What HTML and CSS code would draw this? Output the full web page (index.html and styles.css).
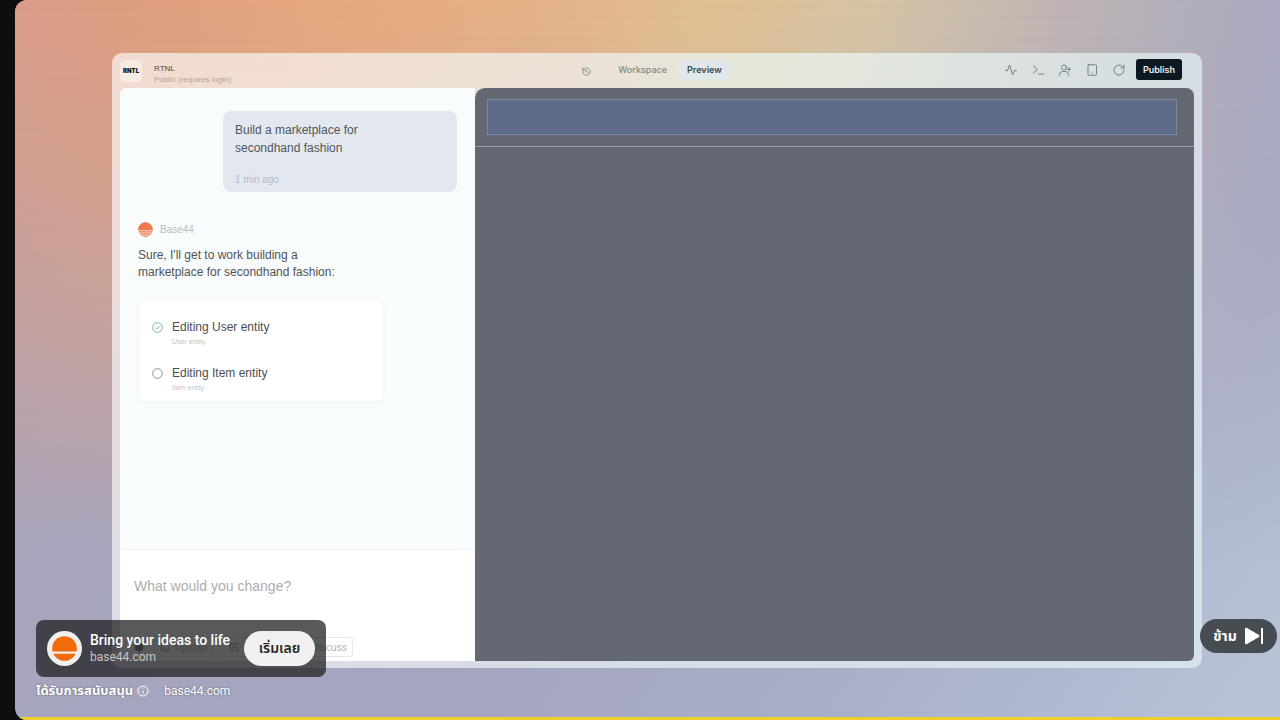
FILE: index.html
```html
<!DOCTYPE html>
<html lang="th">
  <head>
    <meta charset="UTF-8" />
    <meta name="viewport" content="width=device-width, initial-scale=1.0" />
    <title>Base44</title>
    <link rel="stylesheet" href="styles.css">
  </head>
  <body>
    <main class="player">
      <div class="window">
        <header class="topbar">
          <div class="project">
            <span class="project-logo">RNTL</span>
            <div class="project-info">
              <div class="project-name">RTNL</div>
              <div class="project-access">Public (requires login)</div>
            </div>
          </div>
          <nav class="tabs">
            <button type="button" class="icon-btn history" aria-label="History">
              <svg viewBox="0 0 24 24" class="icon small"><path d="M3 8a10 10 0 1 1-1 5" /><path d="M2 2v7h7M11 9l2 5h4" /></svg>
            </button>
            <button type="button" class="tab">Workspace</button>
            <button type="button" class="tab active">Preview</button>
          </nav>
          <div class="actions">
            <button type="button" class="icon-btn" aria-label="Activity">
              <svg viewBox="0 0 24 24" class="icon"><path d="M1 13h4L9 2l6 20 4-9h4" /></svg>
            </button>
            <button type="button" class="icon-btn" aria-label="Console">
              <svg viewBox="0 0 24 24" class="icon"><path d="M3 4l8 7-8 7M13 20h10" /></svg>
            </button>
            <button type="button" class="icon-btn" aria-label="Invite">
              <svg viewBox="0 0 24 24" class="icon"><circle cx="10" cy="7" r="5" /><path d="M1 23v-2a6 6 0 0 1 6-6h6a6 6 0 0 1 6 6v2M20 7v7M16.500 10.500h7" /></svg>
            </button>
            <button type="button" class="icon-btn" aria-label="Mobile view">
              <svg viewBox="0 0 24 24" class="icon"><rect x="4" y="1.500" width="17" height="21" rx="2" /><path d="M12 18v.5" /></svg>
            </button>
            <button type="button" class="icon-btn" aria-label="Refresh">
              <svg viewBox="0 0 24 24" class="icon"><path d="M22 12a10 10 0 1 1-3-7l3 3" /><path d="M22 2v6h-6" /></svg>
            </button>
            <button type="button" class="publish">Publish</button>
          </div>
        </header>

        <div class="workspace">
          <section class="chat">
            <div class="messages">
              <div class="bubble">
                <p>Build a marketplace for<br>secondhand fashion</p>
                <span class="time">1 min ago</span>
              </div>
              <div class="author">
                <svg viewBox="0 0 24 24" class="author-logo">
                  <circle cx="12" cy="12" r="12" fill="#ef7a50" />
                  <path d="M0 14h24M0 17.500h24M0 21h24" stroke="#f8e4dc" stroke-width="1.500" />
                </svg>
                <span>Base44</span>
              </div>
              <p class="reply">Sure, I'll get to work building a<br>marketplace for secondhand fashion:</p>
              <ul class="tasks">
                <li class="task">
                  <svg viewBox="0 0 24 24" class="status done"><circle cx="12" cy="12" r="10.500" /><path d="M8 12.500l3 2.500 5-6" /></svg>
                  <div>
                    <div class="task-title">Editing User entity</div>
                    <div class="task-sub">User entity</div>
                  </div>
                </li>
                <li class="task">
                  <svg viewBox="0 0 24 24" class="status"><circle cx="12" cy="12" r="10.500" /></svg>
                  <div>
                    <div class="task-title">Editing Item entity</div>
                    <div class="task-sub">Item entity</div>
                  </div>
                </li>
              </ul>
            </div>
            <form class="composer">
              <input type="text" class="prompt" placeholder="What would you change?" aria-label="What would you change?" />
              <div class="tools">
                <button type="button" class="tool plain" aria-label="Settings">
                  <svg viewBox="0 0 24 24" class="tool-icon solid"><path d="M12 1l9 5v12l-9 5-9-5V6z" /></svg>
                </button>
                <button type="button" class="tool">
                  <svg viewBox="0 0 24 24" class="tool-icon"><path d="M13 3H3v18h18v-9M3 18l6-6 8 8M19 9V2M15 5l4-4 4 4" /></svg>
                  Upload
                </button>
                <button type="button" class="tool">
                  <svg viewBox="0 0 24 24" class="tool-icon"><path d="M13 3H3v18h18v-9M9 15l1-4 9-9 3 3-9 9z" /></svg>
                  Visual edit
                </button>
                <button type="button" class="tool">Discuss</button>
              </div>
            </form>
          </section>

          <section class="preview">
            <div class="preview-nav"><div class="preview-bar"></div></div>
          </section>
        </div>
      </div>

      <aside class="sponsor">
        <div class="ad-card">
          <svg viewBox="0 0 34 34" class="ad-logo">
            <circle cx="17" cy="17" r="17" fill="#f1efee" />
            <circle cx="17" cy="17" r="12" fill="#f26a0b" />
            <path d="M4 21h26" stroke="#f1efee" stroke-width="2" />
          </svg>
          <div class="ad-text">
            <div class="ad-title">Bring your ideas to life</div>
            <div class="ad-domain">base44.com</div>
          </div>
          <button type="button" class="ad-cta">เริ่มเลย</button>
        </div>
        <div class="ad-meta">
          <span class="ad-label">ได้รับการสนับสนุน</span>
          <svg viewBox="0 0 24 24" class="info"><circle cx="12" cy="12" r="10" /><path d="M12 11v6M12 7v1" /></svg>
          <a href="#" class="ad-link">base44.com</a>
        </div>
      </aside>

      <button type="button" class="skip">
        ข้าม
        <svg viewBox="0 0 20 18" class="skip-icon"><path d="M1 2q0-2 2-1l12 7q1 1 0 2L3 17q-2 1-2-1zM17 1h2v16h-2z" /></svg>
      </button>
      <div class="progress"></div>
    </main>
  </body>
</html>
```
FILE: styles.css
```css
* {
  box-sizing: border-box;
}
body {
  margin: 0;
  background: #0e0e0e;
  font-family: "Liberation Sans", Arial, sans-serif;
}
button {
  font-family: inherit;
  border: none;
  background: none;
  padding: 0;
  cursor: pointer;
}
p,
ul {
  margin: 0;
  padding: 0;
}
.player {
  position: relative;
  display: flex;
  min-height: 100vh;
  margin-left: 15px;
  padding: 53px 78px 52px 97px;
  border-radius: 12px 0 0 12px;
  overflow: hidden;
  background: linear-gradient(125deg, #a9a5bb 0%, #a4a5c2 55%, #aab0c9 75%, #b9c4d8 100%);
}
/* warm glow along the top, fading down */
.player::before {
  content: "";
  position: absolute;
  inset: 0;
  background: linear-gradient(95deg, #d99c88 0%, #e0a07e 12%, #e7a97e 25%, #e4b287 40%, #e0c090 52%, #d5c3a5 65%, #bdb3b5 80%, #a8a8c0 96%);
  -webkit-mask-image: linear-gradient(#000 0%, rgba(0, 0, 0, 0.8) 25%, rgba(0, 0, 0, 0.45) 50%, transparent 78%);
  mask-image: linear-gradient(#000 0%, rgba(0, 0, 0, 0.8) 25%, rgba(0, 0, 0, 0.45) 50%, transparent 78%);
}
.window {
  position: relative;
  flex: 1;
  display: flex;
  flex-direction: column;
  padding: 0 8px 7px;
  border-radius: 10px;
  background: linear-gradient(100deg, rgba(255, 250, 248, 0.66) 0%, rgba(235, 250, 250, 0.66) 55%, rgba(230, 245, 245, 0.66) 100%);
  -webkit-mask-image: none;
}

/* top bar */
.topbar {
  display: grid;
  grid-template-columns: 1fr auto 1fr;
  align-items: center;
  height: 35px;
}
.project {
  display: flex;
  align-items: center;
  gap: 12px;
}
.project-logo {
  width: 22px;
  height: 22px;
  border-radius: 5px;
  background: #f7ebe5;
  color: #111;
  font-family: Inter, sans-serif;
  font-size: 6px;
  font-weight: 900;
  line-height: 22px;
  text-align: center;
}
.project-info {
  padding-top: 8px;
}
.project-name {
  color: #4c4542;
  font-size: 8px;
  line-height: 10px;
}
.project-access {
  color: #b5a59d;
  font-size: 8px;
  line-height: 11px;
}
.tabs,
.actions {
  display: flex;
  align-items: center;
  padding-bottom: 2px;
}
.tab {
  height: 20px;
  padding: 0 10px;
  border-radius: 8px;
  color: #85888a;
  font-family: Inter, sans-serif;
  font-size: 9px;
  font-weight: 500;
}
.tab.active {
  background: #dfe7ea;
  color: #3c464d;
  font-weight: 600;
}
.icon-btn,
.icon {
  display: block;
  width: 12px;
  height: 12px;
}
.icon {
  fill: none;
  stroke: #737f84;
  stroke-width: 2;
  stroke-linecap: round;
  stroke-linejoin: round;
}
.history {
  margin-right: 14px;
  padding-top: 3px;
}
.icon.small {
  width: 9px;
  height: 9px;
}
.actions {
  justify-content: flex-end;
  gap: 15px;
  padding-right: 12px;
}
.publish {
  height: 21px;
  margin-left: -4px;
  padding: 0 7px;
  border-radius: 3px;
  background: #0c1822;
  color: #eef2f4;
  font-family: Inter, sans-serif;
  font-size: 9px;
  font-weight: 600;
}

/* chat */
.workspace {
  flex: 1;
  display: flex;
}
.chat {
  flex: 0 0 355px;
  display: flex;
  flex-direction: column;
  border-radius: 6px 0 0 0;
  background: #f8fcfd;
}
.messages {
  flex: 1;
  padding: 23px 18px 0;
}
.bubble {
  width: 234px;
  margin-left: auto;
  padding: 10px 12px 6px;
  border-radius: 8px;
  background: #e3e8f0;
  color: #505559;
  font-size: 12px;
  line-height: 18px;
}
.time {
  display: block;
  margin-top: 17px;
  color: #b3b9c5;
  font-size: 10px;
  line-height: 12px;
}
.author {
  display: flex;
  align-items: center;
  gap: 7px;
  margin-top: 30px;
  color: #b9bdbe;
  font-size: 10px;
}
.author-logo {
  width: 15px;
  height: 15px;
  border-radius: 50%;
}
.reply {
  margin-top: 10px;
  color: #505355;
  font-size: 12px;
  line-height: 17px;
}
.tasks {
  display: flex;
  flex-direction: column;
  gap: 18px;
  width: 242px;
  margin: 19px 0 0 2px;
  padding: 19px 12px 8px;
  border-radius: 6px;
  background: #fff;
  box-shadow: 0 0 6px rgba(120, 140, 150, 0.06);
  list-style: none;
}
.task {
  display: flex;
  gap: 9px;
}
.status {
  width: 11px;
  height: 11px;
  margin-top: 3px;
  fill: none;
  stroke: #85898c;
  stroke-width: 2;
}
.status.done {
  stroke: #6ab893;
}
.task-title {
  color: #4b4e50;
  font-size: 12px;
  line-height: 17px;
}
.task-sub {
  color: #c2c5c6;
  font-size: 7px;
  line-height: 11px;
}
.composer {
  display: flex;
  flex-direction: column;
  justify-content: space-between;
  height: 112px;
  padding: 26px 14px 4px;
  border-top: 1px solid #edf1f2;
  background: #fff;
}
.prompt {
  width: 100%;
  padding: 0;
  border: none;
  outline: none;
  background: none;
  font-family: inherit;
  font-size: 14px;
  line-height: 20px;
}
.prompt::placeholder {
  color: #adadad;
}
.tools {
  display: flex;
  gap: 10px;
}
.tool {
  display: flex;
  align-items: center;
  gap: 5px;
  height: 20px;
  padding: 0 5px;
  border: 1px solid #e8e8e8;
  border-radius: 3px;
  color: #b2b2b2;
  font-size: 10px;
}
.tool.plain {
  padding: 0;
  border: none;
}
.tool-icon {
  width: 10px;
  height: 10px;
  fill: none;
  stroke: #777;
  stroke-width: 2;
}
.tool-icon.solid {
  fill: #777;
}

/* preview */
.preview {
  flex: 1;
  border-radius: 10px 8px 6px 0;
  background: #636873;
}
.preview-nav {
  padding: 11px 17px 11px 12px;
  border-bottom: 1px solid #9a9ea7;
}
.preview-bar {
  height: 36px;
  border: 1px solid #7a87a0;
  background: #5d6b88;
}

/* player overlays */
.sponsor {
  position: absolute;
  left: 21px;
  bottom: 21px;
  font-family: Roboto, "Noto Sans Thai", sans-serif;
}
.ad-card {
  display: flex;
  align-items: center;
  width: 290px;
  height: 57px;
  padding: 0 11px;
  border-radius: 8px;
  background: rgba(30, 31, 33, 0.74);
}
.ad-logo {
  width: 35px;
  height: 35px;
}
.ad-text {
  flex: 1;
  padding-left: 8px;
}
.ad-title {
  color: #fff;
  font-size: 14px;
  font-weight: 500;
  line-height: 18px;
  white-space: nowrap;
}
.ad-domain {
  color: #c4c4c8;
  font-size: 12px;
  line-height: 17px;
}
.ad-cta {
  width: 71px;
  height: 35px;
  border-radius: 18px;
  background: #f1f1f1;
  color: #272727;
  font-size: 14px;
  font-weight: 600;
}
.ad-meta {
  display: flex;
  align-items: center;
  height: 16px;
  margin-top: 6px;
  color: #fff;
  font-size: 12px;
  text-shadow: 0 0 2px rgba(0, 0, 0, 0.5);
}
.ad-label {
  font-size: 13px;
  font-weight: 700;
}
.info {
  width: 12px;
  height: 12px;
  margin: 0 15px 0 4px;
  fill: none;
  stroke: #fff;
  stroke-width: 2;
}
.ad-link {
  color: inherit;
  text-decoration: none;
}
.skip {
  position: absolute;
  right: 3px;
  bottom: 67px;
  display: flex;
  align-items: center;
  justify-content: center;
  gap: 7px;
  width: 77px;
  height: 34px;
  border-radius: 17px;
  background: #474c53;
  color: #fff;
  font-family: Roboto, "Noto Sans Thai", sans-serif;
  font-size: 14px;
  font-weight: 700;
}
.skip-icon {
  width: 20px;
  height: 18px;
  fill: #fff;
}
.progress {
  position: absolute;
  left: 0;
  right: 0;
  bottom: 0;
  height: 3px;
  background: #efcf2a;
}
```
